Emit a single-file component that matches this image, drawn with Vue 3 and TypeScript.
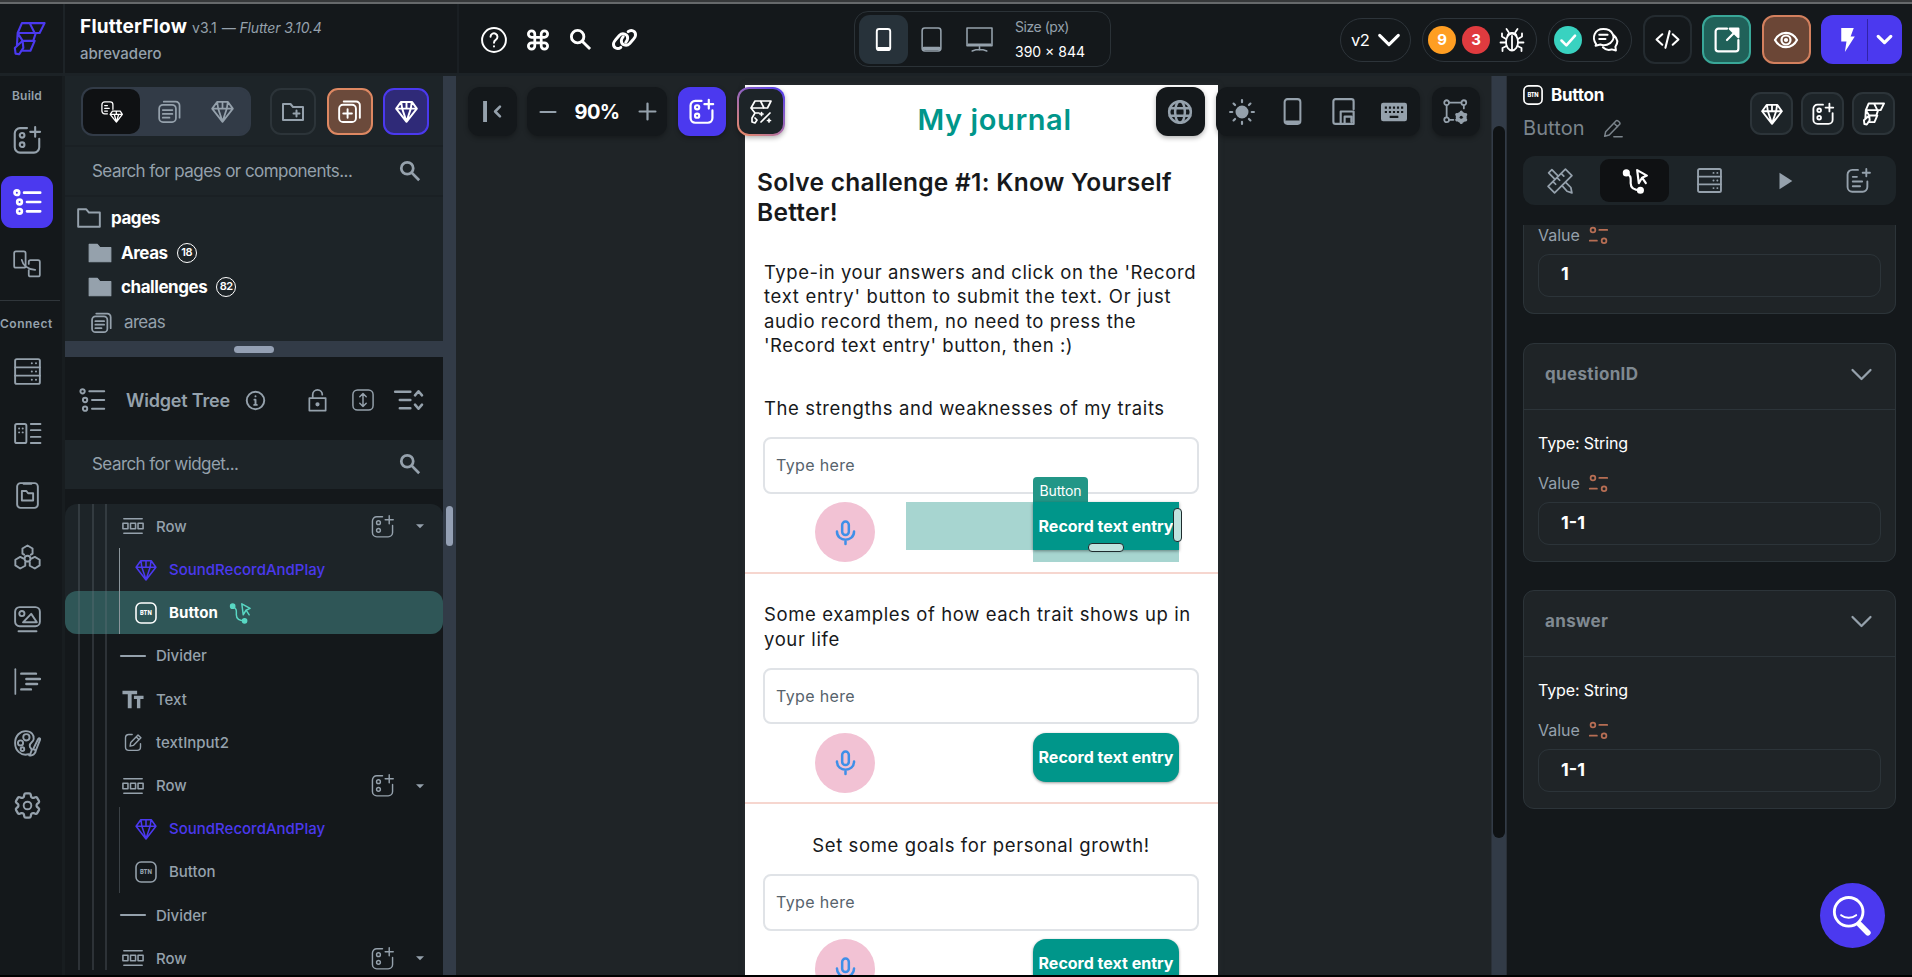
<script setup lang="ts">
import { h } from 'vue'

const ICONS: Record<string, string> = {
  logo: '<path d="M7 1.5h16l-3.5 7H4zM12.5 1.5l3.5 7M4 8.5l3.5 5.5H15l1.8-5.5M7.5 14H16l-3 7H6.5M7.5 14l-5.5 5 .5 4 2.5.5L8 19zM4 8.5L3.5 17"/>',
  addWidget: '<path d="M12 1.8H6A4.5 4.5 0 0 0 1.5 6.3v12A4.5 4.5 0 0 0 6 22.8h12a4.5 4.5 0 0 0 4.5-4.5V11M19 .8v8.4M14.8 5h8.4"/><circle cx="7.8" cy="8" r="2"/><circle cx="7.8" cy="16" r="2"/>',
  tree: '<circle cx="3.3" cy="4" r="2"/><circle cx="5.6" cy="12" r="2"/><circle cx="5.6" cy="20" r="2"/><path d="M9.5 4h13.8M12 12h11.3M12 20h11.3"/>',
  flow: '<rect x="1" y="1.2" width="9.8" height="14" rx="1.5"/><path d="M13.5 12v-1.800a1.500 1.500 0 0 1 1.500-1.500h6.500a1.500 1.500 0 0 1 1.500 1.500v11a1.500 1.500 0 0 1-1.500 1.500H15a1.500 1.500 0 0 1-1.500-1.500v-4M7.500 8.500c1 5 5 8 11.500 8.500"/>',
  server: '<rect x="1" y="1" width="22" height="22" rx="1.5"/><path d="M1 8.300h22M1 15.700h22M15.800 4.700h.1M19.500 4.700h.1M15.800 12h.1M19.500 12h.1M15.800 19.300h.1M19.500 19.300h.1"/>',
  table: '<rect x="1" y="3.500" width="10" height="17" rx="1.500"/><path d="M15 3.500h8.500M15 9h8.500M15 15h8.500M15 20.500h8.500M4.500 7.500h.1M7.700 7.500h.1M4.500 11h.1M7.700 11h.1"/>',
  storage: '<rect x="2.800" y="1" width="18.400" height="22" rx="3"/><path d="M7 8h4l1.500 2H17v6.500H7zM8.500 1.500h7"/>',
  hex: '<path d="M9 9.500L7.500 8.600V4L12 1.300 16.500 4v4.600L15 9.500M8.500 13L5.500 11.500 1.200 14v5l4.300 2.800 4.500-2.500v-3M15.500 13l3-1.500 4.300 2.500v5l-4.300 2.800-4.500-2.500v-3"/><circle cx="12" cy="13" r="2.600"/>',
  media: '<rect x="1" y="1" width="22" height="17" rx="4"/><circle cx="7" cy="6.700" r="2.300"/><path d="M8 14.500L15.300 7l5 7.500zM4 22.500h16"/>',
  timeline: '<path stroke-width="1.500" d="M1.200 1v22"/><path stroke-width="2.200" d="M6.500 5h13M11 9.700h12M11 14.300h9.500M6.500 19h8.500"/>',
  palette: '<path d="M13 21.500c-7 2-12-3.500-12-10C1 5 5.500 1 10.500 1S18 4.500 17.500 8c-.3 3-3.500 3-3.500 6 0 2.500 1.500 1.500 1.500 3.500M17 17l4.500-9c1-1.500 2-.5 1.700.5L19.500 18M17 17c-2.500.5-1 3.500-3.500 5.500 3 .8 5.500-1 6-4.500z"/><circle cx="11" cy="6.500" r="2.800"/><circle cx="5.800" cy="11.500" r="2.300"/><circle cx="7.500" cy="17" r="1.600"/>',
  gear: '<path transform="translate(-2.400 -2.400) scale(1.200)" d="M9.594 3.940c.09-.542.56-.94 1.110-.94h2.593c.55 0 1.020.398 1.110.94l.213 1.281c.063.374.313.686.645.87.074.04.147.083.22.127.325.196.72.257 1.075.124l1.217-.456a1.125 1.125 0 0 1 1.370.49l1.296 2.247a1.125 1.125 0 0 1-.26 1.431l-1.003.827c-.293.241-.438.613-.43.992a7.723 7.723 0 0 1 0 .255c-.008.378.137.75.43.991l1.004.827c.424.35.534.955.26 1.430l-1.298 2.247a1.125 1.125 0 0 1-1.369.491l-1.217-.456c-.355-.133-.75-.072-1.076.124a6.470 6.470 0 0 1-.22.128c-.331.183-.581.495-.644.869l-.213 1.281c-.09.543-.56.94-1.110.94h-2.594c-.55 0-1.019-.398-1.110-.94l-.213-1.281c-.062-.374-.312-.686-.644-.87a6.520 6.520 0 0 1-.22-.127c-.325-.196-.72-.257-1.076-.124l-1.217.456a1.125 1.125 0 0 1-1.369-.49l-1.297-2.247a1.125 1.125 0 0 1 .26-1.431l1.004-.827c.292-.24.437-.613.43-.991a6.932 6.932 0 0 1 0-.255c.007-.38-.138-.751-.43-.992l-1.004-.827a1.125 1.125 0 0 1-.26-1.430l1.297-2.247a1.125 1.125 0 0 1 1.370-.491l1.216.456c.356.133.751.072 1.076-.124.072-.044.146-.086.22-.128.332-.183.582-.495.644-.869l.214-1.280Z"/><circle cx="12" cy="12" r="3.400"/>',
  diamond: '<path d="M6.300 2h11.400L22.800 9 12 22.800 1.200 9zM1.200 9h21.600M7.500 9L12 22.500 16.500 9M6.500 2.300L7.500 9M12 2v7M17.500 2.300L16.500 9"/>',
  pageDiamond: '<path d="M7 14H4a3 3 0 0 1-3-3V4a3 3 0 0 1 3-3h6a3 3 0 0 1 3 3v5M4 5h3M4 8h5M4 11h3"/><path d="M12.500 11h8.500l2.300 3.500-6.500 8.500-6.800-8.500zM10 14.500h13.300M14.500 14.500l2.300 8.500 2.500-8.500M16.700 11v3.500"/>',
  pages: '<rect x="1.200" y="5" width="17.500" height="18" rx="4"/><path d="M6 1.800h12.500A4 4 0 0 1 22.500 6v12.500M5 10.500h10M5 14.500h10M5 18.500h7"/>',
  pagesAdd: '<rect x="1.200" y="5" width="17.500" height="18" rx="4"/><path d="M6 1.500h12.500A4 4 0 0 1 22.800 6v12.500M10 9.500v9M5.500 14h9"/>',
  folderAdd: '<path d="M2 4h7.500l2.500 3h10v13H2zM15.500 10.500v6M12.500 13.500h6"/>',
  folderO: '<path d="M2 4h7.500l2.500 3h10v13H2z"/>',
  folder: '<path fill="currentColor" d="M2 4h7.500l2.500 3h10v13H2z"/>',
  search: '<circle cx="9" cy="9" r="6.500"/><path stroke-linecap="butt" d="M13.500 13.500l8.500 8.500"/>',
  info: '<circle cx="12" cy="12" r="10"/><path d="M12 11v6M12 7.200v.1M10.800 11h1.200M10.500 17h3"/>',
  lock: '<path d="M3.500 9.500h17V22.500h-17zM7 9.500V6a5 5 0 0 1 10 0"/><circle cx="12" cy="16" r="1.300" fill="currentColor"/>',
  expand: '<rect x="1" y="1" width="22" height="22" rx="5"/><path d="M12 5v14M8.500 8.500L12 5l3.500 3.500M8.500 15.500L12 19l3.500-3.500"/>',
  collapseList: '<path d="M1 5h13M5 12h9M5 19h9M18 8l3-3.500L24 8M18 16l3 3.500 3-3.500"/>',
  row: '<path d="M2 4h20M2 20h20"/><rect x="1" y="9" width="5.500" height="6"/><rect x="9.300" y="9" width="5.500" height="6"/><rect x="17.500" y="9" width="5.500" height="6"/>',
  divider: '<path d="M0 12h24"/>',
  text: '<path fill="currentColor" stroke="none" d="M.5 3h16v3.800h-6V22H6.300V6.800H.5zM13 8.500h10.500v3.500H20v10h-3.700V12H13z"/>',
  edit: '<path d="M11 3H7a4 4 0 0 0-4 4v11a4 4 0 0 0 4 4h10a4 4 0 0 0 4-4v-4M8.500 17l.8-4.500L18 3.500l3.500 3.500-8.800 9zM16 6l3.300 3.300"/>',
  caret: '<path fill="currentColor" stroke="none" d="M6 9.500h12l-6 6z"/>',
  action: '<circle cx="4" cy="4.500" r="2.300" fill="currentColor"/><circle cx="17" cy="20.500" r="2.300" fill="currentColor"/><path d="M4 5c5 2 4 5 4 9s3 6.500 9 6.500M14 2l9 5-4.500 2-3 5zM19 9.500l3 4.500"/>',
  help: '<circle cx="12" cy="12" r="11"/><path d="M8.800 9a3.200 3.200 0 1 1 4.800 2.800c-1.200.7-1.600 1.200-1.600 2.700M12 17.800v.2"/>',
  cmd: '<path d="M15.500 5.500v13a3.500 3.500 0 1 0 3.500-3.500H5a3.500 3.500 0 1 0 3.500 3.500v-13A3.500 3.500 0 1 0 5 9h14a3.500 3.500 0 1 0-3.500-3.500"/>',
  link: '<path d="M8.500 19.500c-3 2.500-7.800.5-7-3.800.3-1.500 1-2.300 2-3.500l3.500-4c3-3.200 8.500-1.500 8 3-.2 1.500-.8 2.300-1.800 3.500"/><path d="M15.500 4.500c3-2.500 7.800-.5 7 3.800-.3 1.500-1 2.300-2 3.500l-3.500 4c-3 3.200-8.500 1.500-8-3 .2-1.500.8-2.300 1.800-3.500"/>',
  phone: '<rect x="5" y="1" width="14" height="22" rx="2.500"/><path stroke-width="2.500" d="M6.500 21.200h11"/>',
  tablet: '<rect x="3" y="1" width="18" height="22" rx="2.500"/><path stroke-width="3" d="M4.500 20.500h15"/>',
  desktop: '<rect x="0" y="1" width="24" height="17"/><path d="M1 16.500h22M5 23c4-1.500 10-1.500 14 0M12 19v3"/>',
  chevron: '<path d="M4 8l8 8 8-8"/>',
  bug: '<ellipse cx="12" cy="14" rx="6" ry="8.500"/><path d="M7.500 8c.5-4 8.500-4 9 0M12 8v14M6 11L2 8.500V5.500M18 11l4-2.500V5.500M6 14.500H.5M18 14.500h5.500M6.500 18L2.500 20v3M17.500 18l4 2v3M8.500 4L6.500 1M15.500 4l2-3"/>',
  check: '<path d="M6 12.500l4.500 4.500L18.500 8"/>',
  chat: '<path d="M3 16.500C-1.500 10 1.500 2 10 2s13 8 6.500 13.500C13 17.800 9 17.500 7 16.800L2.500 18zM6 7.500h8M6 11.500h6M20 8c4 3.500 4 7.500 1.500 11l.5 3.500-4-1c-3 1-6 .5-8.500-2"/>',
  code: '<path d="M7 7l-5.500 5L7 17M17 7l5.500 5L17 17M14 4l-4 16"/>',
  open: '<path d="M12 1.500H4A2.500 2.500 0 0 0 1.500 4v16A2.500 2.500 0 0 0 4 22.500h16a2.500 2.500 0 0 0 2.500-2.500v-8M12 12l8-8"/><path fill="currentColor" d="M14.500 1.500h8v8z"/>',
  eye: '<path d="M1 12c5-9.500 17-9.500 22 0-5 9.500-17 9.500-22 0z"/><circle cx="12" cy="12" r="4.500"/><circle cx="12" cy="12" r="1" fill="currentColor"/>',
  bolt: '<path fill="currentColor" stroke="none" d="M6 1h12l-3 8h4L9.500 24l1.500-10H6z"/>',
  globe: '<circle cx="12" cy="12" r="10"/><ellipse cx="12" cy="12" rx="4.500" ry="10"/><path d="M2.500 8.500h19M2.500 15.500h19"/>',
  sun: '<circle cx="12" cy="12" r="5" fill="currentColor"/><path d="M12 1v2M12 21v2M1 12h2M21 12h2M4.200 4.200l1.400 1.400M18.400 18.400l1.400 1.400M4.200 19.800l1.400-1.400M18.400 5.600l1.400-1.400"/>',
  nested: '<path d="M9 23H5a2 2 0 0 1-2-2V3a2 2 0 0 1 2-2h14a2 2 0 0 1 2 2v7M9.500 23V12H21v11zM13 23v-6.500h6V21"/>',
  keyboard: '<rect x="0" y="3.500" width="24" height="17" rx="2" fill="currentColor" stroke="none"/><path stroke="#14181b" stroke-linecap="butt" d="M3.500 8h2M7.300 8h2M11 8h2M14.700 8h2M18.500 8h2M3.500 12h2M7.300 12h2M11 12h2M14.700 12h2M18.500 12h2M8 16.500h8"/>',
  nodes: '<circle cx="3.500" cy="3.500" r="2.300"/><circle cx="20" cy="3.500" r="2.300"/><circle cx="3.500" cy="20" r="2.300"/><path d="M6 3.500h11.500M3.500 6v11.500M20 6v3M6 20h4"/><circle cx="17.500" cy="17.500" r="3.800" stroke-width="3"/><path stroke-width="3" d="M17.500 12.500v10M13.200 15l8.600 5M13.200 20l8.600-5"/><circle cx="17.500" cy="17.500" r="1.500" fill="#14181b" stroke="none"/>',
  collapseLeft: '<path stroke-width="4.500" stroke-linecap="butt" d="M3.500 0v24"/><path stroke-width="3" d="M20.500 6.500L15 12l5.500 5.500"/>',
  minus: '<path d="M2 12h20"/>',
  plus: '<path d="M2 12h20M12 2v20"/>',
  magic: '<path d="M6 1h16l-3.500 7H2zM11.500 1L15 8M2 8l4 5h4M6 13l-3 5v4l3 1 2-3-2-2M12 22l9-9M12.500 12.500v3M11 14h3M20 19v3M18.500 20.500h3"/>',
  pencil: '<path d="M2 22l1.200-5.500L15.500 3.500c1.500-1.500 6 2 4.500 4L7.500 20.500zM13 6l4.500 4.500M13 22.500h10"/>',
  ruler: '<path d="M1 17L17 1l6 6L7 23zM5.500 12.500l2.500 2.500M9.200 8.800l2.500 2.500M13 5l2.500 2.500M9.500 6.500L4.500 1.500 1.500 4.500l5 5M14.500 17l4 4.500 4.500 1.500-1-5-4.500-4.500"/>',
  play: '<path fill="currentColor" stroke="none" d="M6 3l14 9-14 9z"/>',
  docAdd: '<path d="M11.500 1.800H6A4.500 4.500 0 0 0 1.500 6.300v12A4.500 4.500 0 0 0 6 22.800h10a4.500 4.500 0 0 0 4.500-4.500V13M6.500 8.500h4M6.500 13h9M6.500 17.500h7M19.500 1v7M16 4.500h7"/>',
  variable: '<circle cx="5" cy="5" r="3"/><path d="M13 5h10M1 18.500h9"/><circle cx="19" cy="18.500" r="3"/>',
  mic: '<rect x="8.800" y="1.500" width="6.400" height="13" rx="3.200"/><path d="M3.800 11c0 10.500 16.400 10.500 16.400 0M12 19v4"/>',
  btn: '<rect x="1.100" y="1.100" width="21.800" height="21.800" rx="5.500"/><text x="12" y="14.700" text-anchor="middle" font-family="Inter, sans-serif" font-weight="800" font-size="7" textLength="13" lengthAdjust="spacingAndGlyphs" fill="currentColor" stroke="none">BTN</text>',
  smile: '<circle cx="10" cy="9.500" r="8.600"/><path d="M5.500 11.500c2.500 2 6.500 2 9 0" stroke-width="1.200"/><path d="M16.500 17l5 5" stroke-width="3.400"/>',
}

const Icon = (p: { name: string; size?: number; sw?: number }) =>
  h('svg', {
    viewBox: '0 0 24 24',
    width: p.size ?? 24,
    height: p.size ?? 24,
    fill: 'none',
    stroke: 'currentColor',
    'stroke-width': p.sw ?? 2,
    'stroke-linecap': 'round',
    'stroke-linejoin': 'round',
    overflow: 'visible',
    innerHTML: ICONS[p.name],
  })
Icon.props = ['name', 'size', 'sw']

const connectItems = ['server', 'table', 'storage', 'hex', 'media', 'timeline', 'palette', 'gear']

interface TreeNode { icon: string; label: string; kind: string }
const nodes: TreeNode[] = [
  { icon: 'row', label: 'Row', kind: 'parent' },
  { icon: 'diamond', label: 'SoundRecordAndPlay', kind: 'child component first' },
  { icon: 'btn', label: 'Button', kind: 'child selected first' },
  { icon: 'divider', label: 'Divider', kind: '' },
  { icon: 'text', label: 'Text', kind: '' },
  { icon: 'edit', label: 'textInput2', kind: '' },
  { icon: 'row', label: 'Row', kind: 'parent' },
  { icon: 'diamond', label: 'SoundRecordAndPlay', kind: 'child component' },
  { icon: 'btn', label: 'Button', kind: 'child' },
  { icon: 'divider', label: 'Divider', kind: '' },
  { icon: 'row', label: 'Row', kind: 'parent' },
]

const sections = [
  { lines: ['The strengths and weaknesses of my traits'], centered: false, selected: true },
  { lines: ['Some examples of how each trait shows up in', 'your life'], centered: false, selected: false },
  { lines: ['Set some goals for personal growth!'], centered: true, selected: false },
]

const params = [
  { name: 'questionID', value: '1-1' },
  { name: 'answer', value: '1-1' },
]
</script>

<template>
  <div class="app">
    <div class="strip"></div>
    <header class="header">
      <div class="logo"><Icon name="logo" :size="34" :sw="1.5" /></div>
      <div class="project">
        <div class="project-line">
          <b class="brand">FlutterFlow</b><span class="ver">v3.1</span><i class="ver it">— Flutter 3.10.4</i>
        </div>
        <div><span class="project-name">abrevadero</span></div>
      </div>
      <div class="quick">
        <Icon name="help" :size="26" :sw="1.8" />
        <Icon name="cmd" :size="22" :sw="3" />
        <Icon name="search" :size="23" :sw="3" />
        <Icon name="link" :size="25" :sw="2.8" />
      </div>
      <div class="devices">
        <div class="device on"><Icon name="phone" :size="23" :sw="2" /></div>
        <Icon class="dev" name="tablet" :size="25" :sw="1.5" />
        <Icon class="dev" name="desktop" :size="25" :sw="1.5" />
        <div class="size">
          <span class="size-label">Size (px)</span>
          <span class="size-value">390 x 844</span>
        </div>
      </div>
      <div class="actions">
        <div class="pill version"><span>v2</span><Icon name="chevron" :size="28" :sw="2.6" /></div>
        <div class="pill issues">
          <span class="dot warn">9</span><span class="dot err">3</span><Icon name="bug" :size="24" :sw="1.8" />
        </div>
        <div class="pill comments">
          <span class="dot ok"><Icon name="check" :size="26" :sw="2.4" /></span><Icon name="chat" :size="25" :sw="1.9" />
        </div>
        <div class="sq code"><Icon name="code" :size="25" /></div>
        <div class="sq green"><Icon name="open" :size="26" :sw="2" /></div>
        <div class="sq orange"><Icon name="eye" :size="24" :sw="2.2" /></div>
        <div class="run"><div><Icon name="bolt" :size="25" /></div><div><Icon name="chevron" :size="19" :sw="4" /></div></div>
      </div>
    </header>

    <div class="body">
      <nav class="rail">
        <div class="rail-label build">Build</div>
        <div class="rail-item"><Icon name="addWidget" :size="28" :sw="1.8" /></div>
        <div class="rail-item"><div class="rail-on"><Icon name="tree" :size="28" :sw="2.3" /></div></div>
        <div class="rail-item"><Icon name="flow" :size="28" :sw="1.5" /></div>
        <div class="rail-label connect">Connect</div>
        <div v-for="i in connectItems" :key="i" class="rail-item"><Icon :name="i" :size="27" :sw="1.7" /></div>
      </nav>

      <aside class="panel">
        <div class="tools">
          <div class="segments">
            <div class="segment on"><Icon name="pageDiamond" :size="22" :sw="1.4" /></div>
            <div class="segment"><Icon name="pages" :size="23" :sw="1.8" /></div>
            <div class="segment"><Icon name="diamond" :size="23" :sw="1.8" /></div>
          </div>
          <div class="tool"><Icon name="folderAdd" :size="24" :sw="2" /></div>
          <div class="tool orange"><Icon name="pagesAdd" :size="23" :sw="2" /></div>
          <div class="tool violet"><Icon name="diamond" :size="23" :sw="2" /></div>
        </div>
        <div class="search-row"><span>Search for pages or components...</span><Icon name="search" :size="22" :sw="3" /></div>
        <div class="files">
          <div class="file root"><Icon name="folderO" :size="26" :sw="1.8" /><b>pages</b></div>
          <div class="file dir"><Icon name="folder" :size="26" :sw="1" /><b>Areas</b><span class="count">18</span></div>
          <div class="file dir"><Icon name="folder" :size="26" :sw="1" /><b>challenges</b><span class="count">82</span></div>
          <div class="file page"><Icon name="pages" :size="21" :sw="2" /><span>areas</span></div>
        </div>
        <div class="grip"><span></span></div>
        <div class="tree-head">
          <Icon name="tree" :size="26" :sw="1.8" />
          <span class="tree-title">Widget Tree</span>
          <Icon name="info" :size="21" :sw="2.2" />
          <span class="grow"></span>
          <Icon name="lock" :size="23" :sw="1.8" />
          <Icon name="expand" :size="22" :sw="1.6" />
          <Icon name="collapseList" :size="28" :sw="2.2" />
        </div>
        <div class="search-row second"><span>Search for widget...</span><Icon name="search" :size="22" :sw="3" /></div>
        <div class="tree">
          <div class="group-bg"></div>
          <div v-for="(n, i) in nodes" :key="i" class="node" :class="n.kind">
            <Icon class="node-icon" :name="n.icon" :size="n.icon === 'edit' ? 20 : n.icon === 'divider' ? 24 : 22" :sw="n.icon === 'divider' ? 2.2 : 1.7" />
            <span>{{ n.label }}</span>
            <Icon v-if="n.kind.includes('selected')" class="flow-mark" name="action" :size="22" :sw="1.6" />
            <template v-if="n.kind === 'parent'">
              <span class="grow"></span>
              <Icon name="addWidget" :size="23" :sw="1.5" />
              <Icon class="caret" name="caret" :size="16" />
            </template>
          </div>
          <div class="guide g1"></div>
          <div class="guide g2"></div>
          <div class="guide g3"></div>
        </div>
      </aside>

      <div class="split"><span></span></div>

      <main class="canvas">
        <div class="screen">
          <h1>My journal</h1>
          <h2>Solve challenge #1: Know Yourself<br />Better!</h2>
          <p class="intro">
            Type-in your answers and click on the 'Record<br />
            <span class="wide">text entry' button to submit the text. Or just</span><br />
            audio record them, no need to press the<br />
            'Record text entry' button, then :)
          </p>
          <section v-for="(s, k) in sections" :key="k">
            <div class="question" :class="{ centered: s.centered }">
              <div v-for="l in s.lines" :key="l">{{ l }}</div>
            </div>
            <div class="input">Type here</div>
            <div class="record">
              <div class="mic"><Icon name="mic" :size="25" :sw="2.4" /></div>
              <div class="btn-wrap" :class="{ picked: s.selected }">
                <template v-if="s.selected">
                  <div class="span-left"></div>
                  <div class="span-below"></div>
                  <div class="tag">Button</div>
                </template>
                <div class="record-btn">Record text entry</div>
                <template v-if="s.selected">
                  <i class="handle side"></i>
                  <i class="handle bottom"></i>
                </template>
              </div>
            </div>
            <hr />
          </section>
        </div>
        <div class="bar">
          <div class="chip sq-chip"><Icon name="collapseLeft" :size="21" /></div>
          <div class="chip zoom"><Icon name="minus" :size="18" :sw="2.8" /><b>90%</b><Icon name="plus" :size="19" :sw="2.8" /></div>
          <div class="chip sq-chip purple"><Icon name="addWidget" :size="25" :sw="2.1" /></div>
          <div class="chip ai"><Icon name="magic" :size="24" :sw="1.7" /></div>
          <span class="grow"></span>
          <div class="chip sq-chip globe"><Icon name="globe" :size="26" :sw="2.3" /></div>
          <div class="chip views">
            <Icon name="sun" :size="26" :sw="2" />
            <Icon name="phone" :size="27" :sw="1.8" />
            <Icon name="nested" :size="27" :sw="1.9" />
            <Icon name="keyboard" :size="26" :sw="2" />
          </div>
          <div class="chip sq-chip nodes"><Icon name="nodes" :size="25" :sw="1.7" /></div>
        </div>
      </main>

      <div class="scroll"><span></span></div>

      <aside class="props">
        <div class="props-head">
          <div class="names">
            <div class="kind"><Icon name="btn" :size="20" :sw="2" /><b>Button</b></div>
            <div class="label"><span>Button</span><Icon name="pencil" :size="20" :sw="1.8" /></div>
          </div>
          <div class="mini"><Icon name="diamond" :size="22" :sw="2" /></div>
          <div class="mini"><Icon name="addWidget" :size="22" :sw="2" /></div>
          <div class="mini"><Icon name="logo" :size="23" :sw="2" /></div>
        </div>
        <div class="tabs">
          <div class="tab"><Icon name="ruler" :size="26" :sw="1.6" /></div>
          <div class="tab on"><Icon name="action" :size="26" :sw="2" /></div>
          <div class="tab"><Icon name="server" :size="25" :sw="1.8" /></div>
          <div class="tab"><Icon name="play" :size="22" /></div>
          <div class="tab"><Icon name="docAdd" :size="25" :sw="1.8" /></div>
        </div>
        <div class="cards">
          <div class="card cut">
            <div class="value"><span>Value</span><Icon name="variable" :size="19" :sw="2.2" /></div>
            <div class="field"><b>1</b></div>
          </div>
          <div v-for="p in params" :key="p.name" class="card">
            <div class="card-head"><b>{{ p.name }}</b><Icon name="chevron" :size="27" :sw="2" /></div>
            <div class="type">Type: String</div>
            <div class="value"><span>Value</span><Icon name="variable" :size="19" :sw="2.2" /></div>
            <div class="field"><b>{{ p.value }}</b></div>
          </div>
        </div>
        <div class="fab"><Icon name="smile" :size="40" :sw="1.7" /></div>
      </aside>
    </div>
    <div class="foot"></div>
  </div>
</template>

<style>
body { overflow: hidden; background: #000; }
</style>

<style scoped>
* { box-sizing: border-box; }
svg { flex: none; display: block; }
.grow { flex: 1; }
.app { width: 1912px; height: 977px; display: grid; grid-template-rows: 4px 72px 899px 2px; background: #14181b; color: #95a1ac; font-family: Inter, "Liberation Sans", sans-serif; white-space: nowrap; overflow: hidden; }
.strip { background: #36383a; border-bottom: 2px solid #66696b; }
.foot { background: #000; }

.header { display: flex; align-items: flex-start; border-bottom: 3px solid #1c2226; }
.logo { width: 65px; height: 72px; padding: 17px 0 0 12px; border-right: 2px solid #1d2327; color: #4b39ef; }
.project { width: 394px; height: 69px; padding-left: 15px; border-right: 2px solid #1a1f23; }
.project-line { display: flex; align-items: baseline; height: 37px; line-height: 45px; }
.brand { font-size: 19px; letter-spacing: .24px; color: #fff; }
.ver { font-size: 14px; margin-left: 5px; }
.it { letter-spacing: -.14px; }
.project-name { font-size: 15px; font-weight: 500; line-height: 26px; }
.quick { display: flex; align-items: center; height: 71px; width: 395px; padding-left: 22px; color: #fff; gap: 20px; }
.devices { display: flex; align-items: center; width: 257px; height: 56px; margin-top: 7px; padding-left: 4px; border: 1.5px solid #2b3237; border-radius: 14px; }
.device.on { width: 49px; height: 49px; margin-right: 11px; border-radius: 11px; background: #27323a; display: grid; place-items: center; color: #fff; }
.dev { margin-right: 23px; }
.size { display: flex; flex-direction: column; }
.size-label { font-size: 14px; letter-spacing: -.46px; line-height: 25px; }
.size-value { font-size: 14px; line-height: 25px; color: #fff; }
.actions { display: flex; align-items: center; margin-left: 229px; height: 71px; color: #fff; }
.pill { height: 44px; border: 1.5px solid #2d343a; border-radius: 22px; display: flex; align-items: center; }
.version { width: 71px; padding-left: 10px; gap: 6px; font-size: 16.5px; letter-spacing: -.6px; }
.issues { width: 115px; margin-left: 11px; padding-left: 5px; gap: 6px; }
.issues svg { margin-left: 4px; }
.dot { width: 28px; height: 28px; border-radius: 50%; display: grid; place-items: center; font-size: 15px; font-weight: 700; }
.warn { background: #ff9e22; }
.err { background: #e03b3f; }
.ok { background: #39d2c0; }
.comments { width: 84px; margin-left: 11px; padding-left: 5px; gap: 11px; }
.sq { width: 49px; height: 49px; margin-left: 10.5px; border: 2px solid #242b30; border-radius: 12px; display: grid; place-items: center; }
.sq.green { background: #206159; border-color: #39a798; }
.sq.orange { background: #6b4636; border-color: #d3805e; }
.run { width: 81px; height: 49px; margin-left: 10px; border-radius: 12px; background: #4b39ef; display: flex; align-items: center; }
.run > div { display: grid; place-items: center; height: 42px; }
.run > div:first-child { width: 47px; padding-left: 8px; border-right: 1.5px solid #3123a8; }
.run > div:last-child { width: 34px; }

.body { display: grid; grid-template-columns: 65px 378px 13px 1035px 16px 405px; min-height: 0; }
.rail { border-right: 3px solid #181d20; }
.rail-label { font-size: 12px; font-weight: 600; width: 54px; text-align: center; letter-spacing: .2px; }
.build { padding-top: 10px; line-height: 20px; margin-bottom: 2.5px; }
.connect { margin-top: 5px; padding-top: 12px; line-height: 22px; border-top: 1px solid #30363b; width: 60px; margin-bottom: 5.5px; text-align: left; letter-spacing: .5px; }
.rail-item { height: 62px; width: 54px; display: grid; place-items: center; }
.rail-on { width: 52px; height: 52px; border-radius: 11px; background: #4b39ef; color: #fff; display: grid; place-items: center; }

.panel { overflow: hidden; display: flex; flex-direction: column; }
.tools { height: 71px; background: #1d2428; border-bottom: 2px solid #1a2024; padding: 11px 0 0 16px; display: flex; flex: none; }
.segments { width: 170px; height: 49px; border-radius: 12px; background: #323b47; border: 2px solid #323b47; display: flex; margin-right: 19px; }
.segment { width: 53.5px; display: grid; place-items: center; }
.segment.on { width: 58px; margin-right: 3px; border-radius: 10px; background: #0f1113; color: #fff; }
.tool { width: 46px; height: 47px; margin: 1px 10.5px 0 0; border: 2px solid #2c3439; border-radius: 11px; display: grid; place-items: center; }
.tool.orange { background: #6b4a3b; border-color: #de8862; color: #fff; }
.tool.violet { background: #2f2a78; border-color: #4b39ef; color: #fff; }
.search-row { height: 50px; flex: none; background: #1d2428; border-bottom: 2px solid #1a2024; display: flex; justify-content: space-between; align-items: center; padding: 0 22px 0 27px; font-size: 17px; letter-spacing: -.55px; }
.search-row.second { height: 49px; border: 0; padding-bottom: 2px; }
.files { height: 144px; flex: none; background: #1d2428; padding-top: 4px; }
.file { height: 34.6px; display: flex; align-items: center; font-size: 17px; letter-spacing: -.45px; }
.file b { color: #fff; }
.root { padding-left: 11px; }
.root b { margin-left: 9px; }
.dir { padding-left: 22px; }
.dir b { margin-left: 8px; }
.page { padding-left: 26px; }
.page span { margin-left: 12px; letter-spacing: -.65px; }
.count { width: 20px; height: 20px; margin-left: 9px; border: 1.5px solid #fff; border-radius: 50%; color: #fff; font-size: 11px; font-weight: 600; letter-spacing: -.5px; line-height: 17px; text-align: center; }
.grip { height: 16px; flex: none; background: #323b47; display: grid; place-items: center; }
.grip span { width: 40px; height: 7px; border-radius: 4px; background: #94a0b4; }
.tree-head { height: 83px; flex: none; padding: 3px 21px 0 14px; display: flex; align-items: center; }
.tree-title { font-size: 18px; font-weight: 600; letter-spacing: -.18px; margin: 0 15px 0 21px; }
.tree-head .grow + svg { margin-right: 23px; }
.tree-head svg:nth-last-child(2) { margin-right: 20px; }
.tree { position: relative; flex: 1; margin-top: 15px; padding-top: .8px; overflow: hidden; }
.group-bg { position: absolute; left: 0; top: 0; width: 378px; height: 130px; border-radius: 12px; background: #1d2428; }
.node { position: relative; height: 43.2px; display: flex; align-items: center; padding-left: 56px; font-size: 15px; font-weight: 500; }
.node-icon { width: 24px; margin-right: 11px; }
.parent { padding-right: 15px; }
.caret { margin-left: 18px; }
.child { padding-left: 69px; }
.child::before { content: ""; position: absolute; z-index: 2; left: 54px; top: 0; width: 1px; height: 100%; background: #3b4146; }
.child.first::before { background: #8b959b; }
.component { color: #4b39ef; }
.selected { background: #2f5657; border-radius: 12px; color: #fff; font-weight: 700; letter-spacing: .15px; }
.flow-mark { color: #59d8c4; margin-left: 11px; }
.guide { position: absolute; top: 0; height: 466px; width: 2px; background: rgba(110, 120, 128, .28); }
.g1 { left: 13px; }
.g2 { left: 27px; }
.g3 { left: 40px; }

.split { background: #323b47; padding: 430px 0 0 3px; }
.split span { display: block; width: 7px; height: 40px; border-radius: 4px; background: #94a0b4; }

.canvas { position: relative; background: #1f2427; overflow: hidden; }
.bar { position: absolute; left: 12px; right: 11px; top: 11px; height: 49px; display: flex; }
.chip { height: 49px; border-radius: 12px; background: #14181b; display: flex; align-items: center; justify-content: center; box-shadow: 0 2px 5px rgba(0, 0, 0, .3); }
.sq-chip { width: 48.5px; }
.zoom { width: 140px; margin: 0 11px 0 10px; justify-content: space-between; padding: 0 10px 0 12px; }
.zoom b { color: #fff; font-size: 20px; letter-spacing: -.6px; }
.purple { background: #4b39ef; color: #fff; }
.ai { width: 48px; margin-left: 11px; color: #fff; border: 2.5px solid transparent; background: linear-gradient(#1d2428, #1d2428) padding-box, linear-gradient(215deg, #4b39ef, #a06bb5 50%, #ee8b60) border-box; }
.views { width: 204px; margin: 0 12px 0 11px; justify-content: space-between; padding: 0 13px; }

.screen { position: absolute; left: 289px; top: 9px; width: 473px; height: 890px; background: #fff; color: #17191b; overflow: hidden; box-shadow: 0 0 5px #2c3033; }
h1 { margin: 0; height: 68px; padding-left: 26px; line-height: 69px; font-size: 29px; font-weight: 600; letter-spacing: .6px; text-align: center; color: #00968a; }
h2 { margin: 14px 0 0 12px; font-size: 24.5px; letter-spacing: .27px; line-height: 30px; font-weight: 600; }
.intro { margin: 33px 0 9.6px 19px; font-size: 18.5px; letter-spacing: .57px; line-height: 24.4px; }
.wide { letter-spacing: .7px; }
section { padding-top: 28.5px; }
.question { margin: 0 20px 17px 19px; font-size: 18.5px; letter-spacing: .61px; line-height: 24.4px; }
.centered { text-align: center; }
.input { width: 436px; height: 56.5px; margin-left: 18px; padding-left: 11px; border: 2px solid #e0e3e7; border-radius: 8px; line-height: 53px; font-size: 16px; letter-spacing: .35px; color: #57636c; }
.record { display: flex; height: 60px; margin: 8.5px 0 9.5px 70px; }
.mic { width: 60px; height: 60px; border-radius: 50%; background: #f2c2d4; color: #3f8fe8; display: grid; place-items: center; }
.btn-wrap { position: relative; margin-left: 158px; }
.record-btn { position: relative; width: 146px; height: 49px; border-radius: 13px; background: #00968a; color: #fff; font-size: 16px; font-weight: 700; line-height: 49px; text-align: center; box-shadow: 0 1px 3px rgba(0, 0, 0, .4); }
.picked .record-btn { border-radius: 0; height: 48px; line-height: 49px; }
.span-left { position: absolute; right: 146px; top: 0; width: 127px; height: 48px; background: #a7d5d0; }
.span-below { position: absolute; left: 0; top: 48px; width: 146px; height: 12px; background: #a7d5d0; }
.tag { position: absolute; left: 0; top: -25.5px; width: 55px; height: 26px; border-radius: 4px 4px 0 0; background: #229687; color: #fff; font-size: 14px; letter-spacing: -.13px; line-height: 27px; text-align: center; }
.handle { position: absolute; border: 1.5px solid #1e2b2d; border-radius: 4px; background: #bfe2de; }
.side { left: 140px; top: 6px; width: 9px; height: 34px; }
.bottom { left: 55px; top: 41px; width: 36px; height: 9px; }
hr { margin: 0; border: 0; height: 2px; background: #f6d6cf; }

.scroll { background: #323b47; padding: 50px 1px 0; border: solid #2a3038; border-width: 0 1px; }
.scroll span { display: block; height: 712px; border-radius: 7px; background: #0f1214; }

.props { position: relative; padding: 0 16px; }
.props-head { display: flex; height: 80px; padding-top: 6px; }
.names { width: 227px; }
.kind { display: flex; align-items: center; height: 26px; gap: 8px; font-size: 17px; letter-spacing: -.26px; color: #fff; }
.label { display: flex; align-items: center; height: 40px; font-size: 20px; letter-spacing: .1px; gap: 18px; color: #7b848c; }
.mini { width: 43px; height: 43px; margin: 10px 8px 0 0; flex: none; border: 2px solid #2c3439; border-radius: 11px; background: #1d2428; color: #fff; display: grid; place-items: center; }
.mini:last-child { margin-right: 0; }
.tabs { height: 49px; border-radius: 12px; background: #1d2428; padding: 3px 0; display: grid; grid-template-columns: 74px 75px 74px 78px 68px; }
.tab { display: grid; place-items: center; }
.tab.on { margin: 0 3px; border-radius: 9px; background: #0f1113; color: #fff; }
.cards { margin-top: 20px; }
.card { height: 219px; margin-bottom: 28px; border: 1.5px solid #2c3439; border-radius: 11px; background: #1f2427; padding: 0 14px; }
.cut { height: 89px; border-top: 0; border-radius: 0 0 11px 11px; margin-bottom: 29px; }
.value { display: flex; align-items: center; height: 22px; font-size: 16px; gap: 9px; }
.cut .value { height: 20px; }
.value svg { color: #b76e54; }
.field { height: 43px; margin-top: 8px; border: 1.5px solid #2c3439; border-radius: 11px; padding-left: 22px; line-height: 39px; font-size: 18px; color: #fff; }
.cut .field { margin-top: 9px; line-height: 37px; }
.card-head { display: flex; justify-content: space-between; align-items: center; height: 66px; margin: 0 -14px; padding: 0 20px 5px 21px; border-bottom: 1.5px solid #2c3439; font-size: 17px; letter-spacing: .35px; }
.card-head b { color: #7f8991; }
.type { height: 62px; padding-top: 11px; line-height: 44px; font-size: 16px; letter-spacing: -.12px; color: #fff; }
.fab { position: absolute; left: 312.5px; top: 807px; width: 65px; height: 65px; border-radius: 50%; background: #4b39ef; color: #fff; display: grid; place-items: center; }
</style>
